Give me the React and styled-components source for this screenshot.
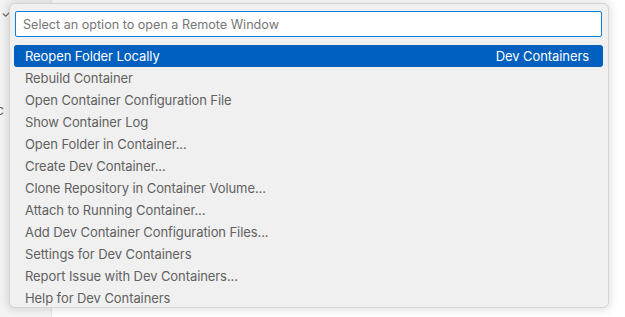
import styled, { createGlobalStyle } from "styled-components";

const GlobalStyle = createGlobalStyle`
  html, body {
    margin: 0;
    padding: 0;
    background: #ffffff;
  }
  body {
    font-family: Inter, "Noto Sans", "Liberation Sans", sans-serif;
  }
`;

const Page = styled.div`
  position: relative;
  width: 625px;
  height: 317px;
  overflow: hidden;
  display: flex;
  background: #ffffff;
`;

const SideStrip = styled.div`
  width: 52px;
  height: 100%;
  background: #f3f3f3;
  border-right: 1px solid #e5e5e5;
  display: flex;
  flex-direction: column;
  padding-top: 2px;
  box-sizing: border-box;
  overflow: hidden;
`;

const StripItem = styled.div`
  height: 22px;
  flex-shrink: 0;
  line-height: 22px;
  font-size: 13px;
  color: #616161;
  white-space: nowrap;
  margin-left: ${(p) => p.$indent || 0}px;
  margin-top: ${(p) => p.$shift || 0}px;
`;

const Picker = styled.div`
  position: absolute;
  left: 9px;
  top: 3px;
  width: 600px;
  height: 305px;
  box-sizing: border-box;
  background: #f0f0f0;
  border: 1px solid #d4d4d4;
  border-radius: 6px;
  box-shadow: 0 0 8px 2px rgba(0, 0, 0, 0.12);
  padding: 7px 5px 0 4px;
  display: flex;
  flex-direction: column;
  gap: 8px;
  overflow: hidden;
`;

const SearchBox = styled.div`
  flex-shrink: 0;
  height: 26px;
  box-sizing: border-box;
  margin: 0 1px;
  background: #ffffff;
  border: 1px solid #0a7fdc;
  border-radius: 2px;
  display: flex;
  align-items: center;
  padding-left: 7px;
  font-size: 12.6px;
  color: #767676;
`;

const List = styled.div`
  flex-shrink: 0;
  display: flex;
  flex-direction: column;
`;

const Row = styled.div`
  height: 22px;
  flex-shrink: 0;
  display: flex;
  align-items: center;
  justify-content: space-between;
  padding: 0 14px 0 11px;
  border-radius: 3px;
  font-size: 13px;
  letter-spacing: -0.08px;
  color: ${(p) => (p.$active ? "#ffffff" : "#616161")};
  background: ${(p) => (p.$active ? "#0060c0" : "transparent")};
  white-space: nowrap;
`;

const Detail = styled.span`
  color: inherit;
`;

const items = [
  "Reopen Folder Locally",
  "Rebuild Container",
  "Open Container Configuration File",
  "Show Container Log",
  "Open Folder in Container...",
  "Create Dev Container...",
  "Clone Repository in Container Volume...",
  "Attach to Running Container...",
  "Add Dev Container Configuration Files...",
  "Settings for Dev Containers",
  "Report Issue with Dev Containers...",
  "Help for Dev Containers",
];

export default function App() {
  return (
    <>
      <GlobalStyle />
      <Page>
        <SideStrip>
          <StripItem $indent={1}>✓</StripItem>
          <StripItem />
          <StripItem />
          <StripItem />
          <StripItem $indent={-15} $shift={9}>src</StripItem>
          <StripItem />
          <StripItem />
          <StripItem $indent={-23}>etc</StripItem>
        </SideStrip>
        <Picker>
          <SearchBox>Select an option to open a Remote Window</SearchBox>
          <List>
            {items.map((label, i) => (
              <Row key={label} $active={i === 0}>
                <span>{label}</span>
                {i === 0 && <Detail>Dev Containers</Detail>}
              </Row>
            ))}
          </List>
        </Picker>
      </Page>
    </>
  );
}
